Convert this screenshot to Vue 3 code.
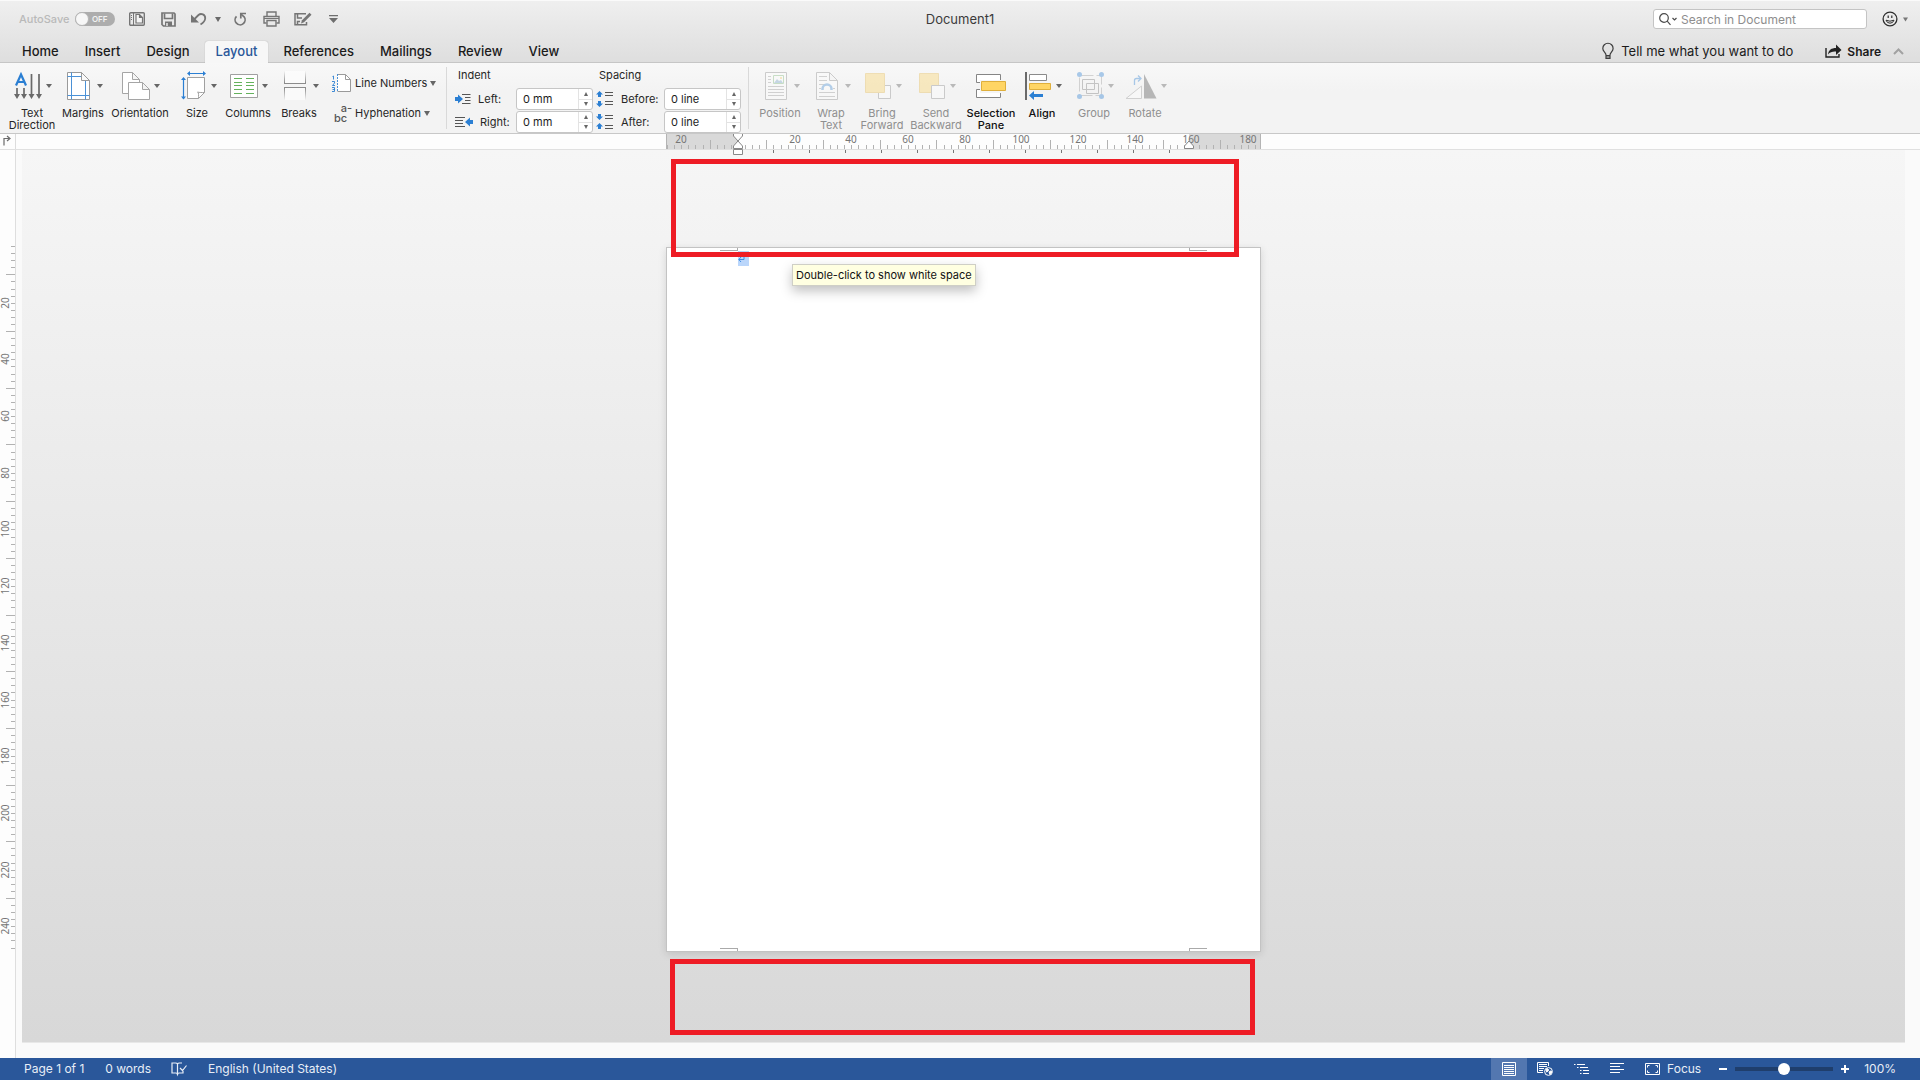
<script setup>
import { ref } from 'vue'

const tabs = ['Home', 'Insert', 'Design', 'Layout', 'References', 'Mailings', 'Review', 'View']
const activeTab = ref('Layout')
const autoSave = ref(false)
const search = ref('')
const zoom = ref(50)

const indentLeft = ref('0 mm')
const indentRight = ref('0 mm')
const spaceBefore = ref('0 line')
const spaceAfter = ref('0 line')

// Ruler geometry: 72 dpi, one tick every 2.5 mm
const STEP = 7.0866
const origin = 72
const hTicks = []
for (let i = -10; i <= 73; i++) {
  const long = Math.abs(i % 8) === 4
  hTicks.push({ x: Math.round(origin + i * STEP), top: long ? 6 : 11 })
}
const hLabels = [-20, 20, 40, 60, 80, 100, 120, 140, 160, 180].map((mm) => ({
  text: Math.abs(mm),
  x: mm === 180 ? 582 : mm === -20 ? 15 : Math.round(origin + (mm / 2.5) * STEP) - (mm === 160 ? 1 : 0)
}))
const tabStops = Array.from({ length: 12 }, (_, i) => 107 + i * 36)
const vTicks = Array.from({ length: 100 }, (_, i) => ({
  y: Math.round(i * STEP),
  left: i % 8 === 4 ? 6 : 11
}))
const vLabels = Array.from({ length: 12 }, (_, i) => ({
  text: (i + 1) * 20,
  y: Math.round((i + 1) * 8 * STEP)
}))
</script>

<template>
  <div class="app">
    <header class="top">
      <div class="titlebar">
        <div class="quick">
          <label class="autosave">
            <span>AutoSave</span>
            <input v-model="autoSave" type="checkbox" />
            <span class="switch"><i></i>OFF</span>
          </label>
          <button class="q q1" aria-label="Sidebar">
            <svg width="16" height="14" viewBox="0 0 16 14" fill="none" stroke="#757575"><rect x=".7" y=".7" width="14.6" height="12.6" rx="1" stroke-width="1.400" /><path d="M4.500 1v12M2 3.500h1M2 5.500h1M2 7.500h1" /><path d="M7 2.500h3.500l3 3v5.500H7zM10.500 2.500v3h3" stroke-width="1.200" fill="#f4f4f4" /></svg>
          </button>
          <button class="q q2" aria-label="Save">
            <svg width="15" height="15" viewBox="0 0 15 15" fill="none" stroke="#757575" stroke-width="1.700"><path d="M1 1h12l1 1v12H2.500L1 12.500z" /><path d="M3.500 1.500v5h8v-5" /><path d="M4 9.500h7V14H4z" fill="#757575" stroke="none" /><path d="M6 11v3" stroke="#e9e9e9" stroke-width="1.500" /></svg>
          </button>
          <button class="q q3" aria-label="Undo">
            <svg width="16" height="14" viewBox="0 0 16 14" fill="none" stroke="#757575" stroke-width="1.800"><path d="M3 7.500 7.500 3C10 .8 14.500 2.500 14.200 6.500 14 9 12 11 9.500 12.500" /><path d="M0 2.500v8h8z" fill="#757575" stroke="none" /></svg>
          </button>
          <button class="q q4" aria-label="Undo history"><svg width="6" height="5" viewBox="0 0 6 5"><path d="M0 0h6L3 5z" fill="#6a6a6a" /></svg></button>
          <button class="q q5" aria-label="Redo">
            <svg width="13" height="14" viewBox="0 0 13 14" fill="none" stroke="#757575" stroke-width="1.700"><path d="M2.500 4.300a5 5 0 1 0 7.600.500L7 2.200" /><path d="M12 1.500H6.800v5" /></svg>
          </button>
          <button class="q q6" aria-label="Print">
            <svg width="17" height="16" viewBox="0 0 17 16" fill="none" stroke="#757575" stroke-width="1.400"><path d="M4 5V1h9v4" /><path d="M3.500 12H1V5.500h15V12h-2.500" /><path d="M4 9.500h9V15H4z" /><path d="M1 7.500h15" stroke-width="1" /></svg>
          </button>
          <button class="q q7" aria-label="Edit">
            <svg width="18" height="15" viewBox="0 0 18 15" fill="none" stroke="#757575" stroke-width="1.500"><path d="M12 1.800H1v11h11.500V10" /><path d="M3.500 2v4H8M3.500 13V9.500H6" /><path d="m7 11.500 1-3.200L15.500.800l2 2-7.500 7.500z" fill="#757575" stroke="none" /></svg>
          </button>
          <button class="q" aria-label="Customize toolbar"><svg width="9" height="8" viewBox="0 0 9 8"><path d="M0 0h9v1.300H0zM0 3h9L4.500 8z" fill="#6e6e6e" /></svg></button>
        </div>
        <h1>Document1</h1>
        <div class="right-tools">
          <label class="search">
            <svg width="18" height="13" viewBox="0 0 18 13" fill="none" stroke="#4b4b4b" stroke-width="1.200"><circle cx="5" cy="5" r="4.300" /><path d="m8.200 8.200 3.300 3.600M13.500 5l2 2 2-2" /></svg>
            <input v-model="search" type="text" placeholder="Search in Document" aria-label="Search in Document" />
          </label>
          <button class="smile" aria-label="Feedback">
            <svg width="16" height="16" viewBox="0 0 16 16" fill="none" stroke="#2e2e2e" stroke-width="1.300"><circle cx="8" cy="8" r="6.900" /><path d="M4 9.200q4 2 8 0-1 3-4 3t-4-3z" stroke-width="1" /><path d="M6.200 4.500v2.500M9.800 4.500v2.500" stroke-width="1.200" /></svg>
            <svg width="5" height="5" viewBox="0 0 6 5"><path d="M0 0h6L3 5z" fill="#777" /></svg>
          </button>
        </div>
      </div>
      <div class="tabbar">
        <nav>
          <button v-for="t in tabs" :key="t" class="tab" :class="{ active: t === activeTab }" @click="activeTab = t">{{ t }}</button>
        </nav>
        <div class="assist">
          <button class="tell">
            <svg width="12" height="17" viewBox="0 0 12 17" fill="none" stroke="#3c3c3c" stroke-width="1.200"><path d="M4 12c0-2.500-3.200-3.500-3.200-6.600a5.100 5.100 0 0 1 10.300 0C11.100 8.500 8 9.500 8 12v3.500H4zM4 12.500h4M4 14h4" /></svg>
            Tell me what you want to do
          </button>
          <button class="share">
            <svg width="17" height="14" viewBox="0 0 17 14"><path d="M1 4v9h13v-3" fill="none" stroke="#222" stroke-width="1.400" /><path d="M3 10.500C3.500 6 6.500 4 11 4V.500L16.500 6 11 11V7.500C7.500 7.300 5 8 3 10.500z" fill="#222" /></svg>
            Share
          </button>
          <button class="fold" aria-label="Collapse ribbon"><svg width="11" height="7" viewBox="0 0 11 7" fill="none" stroke="#a2a2a2" stroke-width="2"><path d="m1 6 4.500-4.500L10 6" /></svg></button>
        </div>
      </div>
    </header>

    <section class="ribbon">
      <div class="group">
        <button class="big w48">
          <span class="pic">
            <svg width="28" height="30" viewBox="0 0 28 30" fill="none"><path d="M2 14.500 7 3.500l5 11M3.700 11h6.700" stroke="#2b7fd3" stroke-width="2.200" /><path d="M3 17v8M10 17v8M17.500 3v22M25 3v22" stroke="#6a6a6a" stroke-width="1.700" /><path d="m0 23 3 5 3-5zM7 23l3 5 3-5zM14.500 23l3 5 3-5zM22 23l3 5 3-5z" fill="#6a6a6a" /></svg>
            <i class="caret"></i>
          </span>
          Text<br />Direction
        </button>
        <button class="big w46">
          <span class="pic">
            <svg width="28" height="30" viewBox="0 0 28 30" fill="none"><path d="M2.500 1.500h14l8 8v19h-22z" fill="#fff" stroke="#9a9a9a" /><path d="M6.500 1.500v27M2.500 5.500h14M20.500 9.500v19M2.500 24.500h22" stroke="#4b91d6" /><path d="M16.500 1.500v8h8z" fill="#fafafa" stroke="#9a9a9a" /></svg>
            <i class="caret"></i>
          </span>
          Margins
        </button>
        <button class="big w60">
          <span class="pic">
            <svg width="28" height="30" viewBox="0 0 28 30" fill="#fff" stroke="#a5a5a5"><path d="M.500 1.500h10l7 7v14H.500zM10.500 1.500v7h7" /><path d="M6.500 11.500h14l7 7v10h-21zM20.500 11.500v7h7" /></svg>
            <i class="caret"></i>
          </span>
          Orientation
        </button>
        <button class="big w46">
          <span class="pic">
            <svg width="28" height="30" viewBox="0 0 28 30" fill="none"><path d="M8.500 6.500h17v15l-6 6h-11z" fill="#fff" stroke="#a0a0a0" /><path d="M19.500 27.500c0-3 .5-6-1-6.500 2 .7 4.500.5 7 .500" stroke="#a0a0a0" /><path d="M9 2.500h17M4.500 7v21" stroke="#2b7fd3" stroke-width="1.200" /><path d="m11 0-3 2.500L11 5zM24 0l3 2.500L24 5zM2 9l2.500-3L7 9zM2 25.500l2.500 3 2.500-3z" fill="#2b7fd3" /></svg>
            <i class="caret"></i>
          </span>
          Size
        </button>
        <button class="big w48">
          <span class="pic">
            <svg width="28" height="30" viewBox="0 0 28 30" fill="none"><path d="M.500 3.500h27v23H.500z" fill="#fff" stroke="#a0a0a0" /><path d="M4 7.500h8M4 11.500h8M4 14.500h8M4 18.500h8M4 22.500h8M16 7.500h8M16 11.500h8M16 14.500h8M16 18.500h8M16 22.500h8" stroke="#64b25c" stroke-width="1.200" /></svg>
            <i class="caret"></i>
          </span>
          Columns
        </button>
        <button class="big w46">
          <span class="pic">
            <svg width="28" height="30" viewBox="0 0 28 30" fill="none"><defs><linearGradient id="fadeUp" x1="0" y1="1" x2="0" y2="0"><stop stop-color="#888" /><stop offset="1" stop-color="#888" stop-opacity="0" /></linearGradient><linearGradient id="fadeDown" x1="0" y1="0" x2="0" y2="1"><stop stop-color="#888" /><stop offset="1" stop-color="#888" stop-opacity="0" /></linearGradient></defs><path d="M4 0h20v12H4zM4 17h20v12H4z" fill="#fff" opacity=".6" /><path d="M3 0h1v12H3zM24 0h1v12h-1z" fill="url(#fadeUp)" /><path d="M3 17h1v12H3zM24 17h1v12h-1z" fill="url(#fadeDown)" /><path d="M3 12.500h22M3 16.500h22" stroke="#8c8c8c" /></svg>
            <i class="caret"></i>
          </span>
          Breaks
        </button>
        <div class="stack">
          <button class="small">
            <svg width="20" height="20" viewBox="0 0 20 20" fill="none"><path d="M5.500 1.500h8l5 5v12h-13" fill="#fff" stroke="#9a9a9a" /><path d="M13.500 1.500v5h5" stroke="#9a9a9a" /><path d="M5.500 1v18" stroke="#4b91d6" stroke-dasharray="2 1" /><path d="M.500 3.500 1.500 3v3.500M0 8.500h2.500v1.500l-2 2.500h2.500M0 14.500h2.500v4H0M.500 16.500h2" stroke="#2b7fd3" stroke-width=".9" /></svg>
            <span>Line Numbers</span><i class="caret"></i>
          </button>
          <button class="small">
            <span class="hy" aria-hidden="true"><b>a-</b><b>bc</b></span>
            <span>Hyphenation</span><i class="caret"></i>
          </button>
        </div>
      </div>

      <div class="group fields">
        <fieldset class="indent">
          <legend>Indent</legend>
          <div class="row">
            <svg width="16" height="12" viewBox="0 0 16 12"><path d="M0 4h3V1.500L8 6l-5 4.500V8H0z" fill="#2b7fd3" /><path d="M7 1.500h8.500M10 4.500h5.500M10 7.500h5.500M7 10.500h8.500" stroke="#555" /></svg>
            <label for="il">Left:</label>
            <span class="num"><input id="il" v-model="indentLeft" type="text" /><span class="step"><button aria-label="Increase left"><i class="up"></i></button><button aria-label="Decrease left"><i class="down"></i></button></span></span>
          </div>
          <div class="row">
            <svg width="18" height="12" viewBox="0 0 18 12"><path d="M0 1.500h10M0 4.500h8M0 7.500h8M0 10.500h10" stroke="#555" /><path d="M18 4h-3V1.500L10 6l5 4.500V8h3z" fill="#2b7fd3" /></svg>
            <label for="ir">Right:</label>
            <span class="num"><input id="ir" v-model="indentRight" type="text" /><span class="step"><button aria-label="Increase right"><i class="up"></i></button><button aria-label="Decrease right"><i class="down"></i></button></span></span>
          </div>
        </fieldset>
        <fieldset class="spacing">
          <legend>Spacing</legend>
          <div class="row">
            <svg width="18" height="18" viewBox="0 0 18 18"><path d="M3.500 1 7 4.500H5V7H2V4.500H0zM3.500 17 0 13.500h2V11h3v2.500h2z" fill="#2b7fd3" /><path d="M9 2.500h8M9 5.500h8M9 11.500h8M9 14.500h8" stroke="#555" /></svg>
            <label for="sb">Before:</label>
            <span class="num"><input id="sb" v-model="spaceBefore" type="text" /><span class="step"><button aria-label="Increase before"><i class="up"></i></button><button aria-label="Decrease before"><i class="down"></i></button></span></span>
          </div>
          <div class="row">
            <svg width="18" height="18" viewBox="0 0 18 18"><path d="M3.500 7 0 3.500h2V1h3v2.500h2zM3.500 10 7 13.500H5V16H2v-2.500H0z" fill="#2b7fd3" /><path d="M9 2.500h8M9 5.500h8M9 12.500h8M9 15.500h8" stroke="#555" /></svg>
            <label for="sa">After:</label>
            <span class="num"><input id="sa" v-model="spaceAfter" type="text" /><span class="step"><button aria-label="Increase after"><i class="up"></i></button><button aria-label="Decrease after"><i class="down"></i></button></span></span>
          </div>
        </fieldset>
      </div>

      <div class="group">
        <button class="big w48" disabled>
          <span class="pic">
            <svg width="28" height="30" viewBox="0 0 28 30" fill="none"><path d="M3.500 1.500h21v27h-21z" fill="#fff" stroke="#888" /><path d="M6 5.500h3M6 8.500h3M6 11.500h3M6 15.500h16M6 18.500h16M6 21.500h16M6 24.500h16" stroke="#999" /><path d="M11.500 4.500h10v8h-10z" stroke="#7fb97a" /><path d="m12 12 3-4 2 2 2-1 2 3z" fill="#7aa6c9" /><circle cx="19" cy="7" r="1" fill="#f2c14a" /></svg>
            <i class="caret"></i>
          </span>
          Position
        </button>
        <button class="big w46" disabled>
          <span class="pic">
            <svg width="28" height="30" viewBox="0 0 28 30" fill="none"><path d="M3.500 1.500h13l8 8v19h-21zM16.500 1.500v8h8" fill="#fff" stroke="#888" /><path d="M6 5.500h8M6 9.500h8M6 13.500h6M6 17.500h2M20 17.500h2M6 21.500h16M6 25.500h16" stroke="#999" /><path d="M9.500 19v-1a4.500 4.500 0 0 1 9 0v1" stroke="#4b91d6" stroke-width="2.500" /></svg>
            <i class="caret"></i>
          </span>
          Wrap<br />Text
        </button>
        <button class="big w48" disabled>
          <span class="pic">
            <svg width="28" height="30" viewBox="0 0 28 30"><path d="M14.500 14.500h12v13h-12z" fill="#fff" stroke="#888" /><path d="M1.500 2.500h19v19h-19z" fill="#fbd469" stroke="#e5b84a" /></svg>
            <i class="caret"></i>
          </span>
          Bring<br />Forward
        </button>
        <button class="big w52" disabled>
          <span class="pic">
            <svg width="28" height="30" viewBox="0 0 28 30"><path d="M1.500 2.500h19v19h-19z" fill="#fbd469" stroke="#e5b84a" /><path d="M13.500 14.500h13v13h-13z" fill="#fff" stroke="#888" /></svg>
            <i class="caret"></i>
          </span>
          Send<br />Backward
        </button>
        <button class="big strong w50">
          <span class="pic">
            <svg width="30" height="30" viewBox="0 0 30 30"><path d="M.500 3.500h24v8H.500zM.500 18.500h24v8H.500z" fill="#fff" stroke="#858585" /><path d="M4 9h22v13H4z" fill="#f5f5f5" /><path d="M5.500 10.500h24v9h-24z" fill="#ffd564" stroke="#dfaf3c" /></svg>
          </span>
          Selection<br />Pane
        </button>
        <button class="big strong w44">
          <span class="pic">
            <svg width="28" height="30" viewBox="0 0 28 30"><path d="M1 1h2v28H1z" fill="#6a6a6a" /><path d="M5.500 3.500h17v6h-17z" fill="#fff" stroke="#8a8a8a" /><path d="M5.500 12.500h21v6h-21z" fill="#ffd564" stroke="#dfaf3c" /><path d="M5 24.500 10 20v3h9v3h-9v3z" fill="#2b7fd3" /></svg>
            <i class="caret"></i>
          </span>
          Align
        </button>
        <button class="big w52" disabled>
          <span class="pic">
            <svg width="28" height="30" viewBox="0 0 28 30" fill="none"><path d="M3.500 4.500h22v20h-22z" stroke="#999" stroke-dasharray="14 3" /><path d="M6.500 8.500h12v10h-12zM10.500 12.500h12v10h-12z" stroke="#777" /><path d="M6 3.500a2.500 2.500 0 1 0-5 0 2.500 2.500 0 0 0 5 0zM28 3.500a2.500 2.500 0 1 0-5 0 2.500 2.500 0 0 0 5 0zM6 25.500a2.500 2.500 0 1 0-5 0 2.500 2.500 0 0 0 5 0zM28 25.500a2.500 2.500 0 1 0-5 0 2.500 2.500 0 0 0 5 0z" fill="#2b7fd3" /></svg>
            <i class="caret"></i>
          </span>
          Group
        </button>
        <button class="big w42" disabled>
          <span class="pic">
            <svg width="32" height="30" viewBox="0 0 32 30" fill="none"><path d="M16.500 15v12.500H1z" fill="#fff" stroke="#999" /><path d="M19 3v24.500h12.500z" fill="#555" /><path d="M9.500 14V9.500q0-2 2-2H15" stroke="#2b7fd3" stroke-width="1.300" /><path d="m13 4.500 3 3-3 3" stroke="#2b7fd3" stroke-width="1.300" /></svg>
            <i class="caret"></i>
          </span>
          Rotate
        </button>
      </div>
    </section>

    <div class="hruler">
      <button class="corner" aria-label="Tab stop type"><svg width="8" height="11" viewBox="0 0 8 11" fill="none" stroke="#6b6b6b" stroke-width="1.200"><path d="M1 10.500V3.500h5M4 1l3 2.500L4 6" /></svg></button>
      <div class="hscale">
        <svg width="595" height="15" viewBox="0 0 595 15">
          <path d="M0 0h72v15H0zM523 0h72v15h-72z" fill="#d9d9d9" />
          <path d="M0 0h1v15H0zM594 0h1v15h-1z" fill="#b4b4b4" />
          <path v-for="t in hTicks" :key="t.x" :d="`M${t.x} ${t.top}h1V15h-1z`" fill="#b2b2b2" />
          <text v-for="l in hLabels" :key="l.x" :x="l.x" y="9" text-anchor="middle">{{ l.text }}</text>
          <path v-for="s in tabStops" :key="s" :d="`M${s} 16h1v3h-1z`" fill="#777" />
          <path d="M67.500 0v2l4.500 5 4.500-5V0M67.500 14.500V12L72 7l4.500 5v2.500z" fill="#fff" stroke="#888" />
          <path d="M67.500 15.500h9v5h-9z" fill="#fff" stroke="#888" />
          <path d="M518.500 14.500V12l4.500-5 4.500 5v2.500z" fill="#fff" stroke="#888" />
        </svg>
      </div>
    </div>

    <main class="work">
      <aside class="vruler">
        <svg width="15" height="706" viewBox="0 0 15 706">
          <path v-for="t in vTicks" :key="t.y" :d="`M${t.left} ${t.y}H15v1H${t.left}z`" fill="#b2b2b2" />
          <text v-for="l in vLabels" :key="l.y" :transform="`translate(9 ${l.y}) rotate(-90)`" text-anchor="middle">{{ l.text }}</text>
        </svg>
      </aside>
      <div class="canvas">
        <article class="page">
          <i class="mark tl"></i><i class="mark tr"></i><i class="mark bl"></i><i class="mark br"></i>
          <p class="para"><span><svg width="7" height="8" viewBox="0 0 7 8" fill="none" stroke="#3d8ee6"><path d="M6 0v4.500H1M3 2 .800 4.500 3 7" /></svg></span></p>
          <div class="callout upper"></div>
          <div class="callout lower"></div>
          <div class="tip" role="tooltip">Double-click to show white space</div>
        </article>
      </div>
    </main>

    <footer class="status">
      <span class="pages">Page 1 of 1</span>
      <span class="words">0 words</span>
      <button class="proof" aria-label="Proofing">
        <svg width="16" height="14" viewBox="0 0 16 14" fill="none" stroke="#e8eef7" stroke-width="1.200"><path d="M11 1H8.500Q7 1 6.500 2 6 1 4.500 1H1v10h4q1 0 1.500 1.500Q7 11 8 11h4V9M6.500 2v10M9 6l2.500 2.500 4-5" /></svg>
      </button>
      <span>English (United States)</span>
      <div class="views">
        <button class="view on" aria-label="Print layout"><svg width="14" height="14" viewBox="0 0 14 14" fill="none" stroke="#fff"><path d="M.500.500h13v13H.500zM2 3.500h10M2 5.500h10M2 7.500h10M2 9.500h10M2 11.500h10" /></svg></button>
        <button class="view" aria-label="Web layout"><svg width="16" height="14" viewBox="0 0 16 14" fill="none" stroke="#fff"><path d="M6 10.500H.500V.500h11V4M2 2.500h8M2 4.500h8M2 6.500h5M2 8.500h4" /><circle cx="11.500" cy="9.500" r="3.900" fill="#2a579a" /><path d="M9 7.500q2-1.500 2.500 0T9.500 10zM12 10q2-2 3 0l-2 2.500z" fill="#fff" /></svg></button>
        <button class="view" aria-label="Outline"><svg width="15" height="12" viewBox="0 0 15 12" fill="none" stroke="#fff"><path d="M0 1.500h1.500M3 1.500h8M3 4.500h1.500M6 4.500h8M6 7.500h1.500M9 7.500h6M6 10.500h1.500M9 10.500h6" /></svg></button>
        <button class="view" aria-label="Draft"><svg width="14" height="11" viewBox="0 0 14 11" fill="none" stroke="#fff"><path d="M0 .500h14M0 3.500h10M0 6.500h14M0 9.500h10" /></svg></button>
        <button class="focus">
          <svg width="15" height="12" viewBox="0 0 15 12" fill="none" stroke="#fff"><path d="M.500.500h14v11H.500zM2.500 4.500v-2h2M10.500 2.500h2v2M12.500 7.500v2h-2M4.500 9.500h-2v-2" /></svg>
          Focus
        </button>
        <button class="pm" aria-label="Zoom out"><svg width="8" height="8" viewBox="0 0 8 8"><path d="M0 3h8v2H0z" fill="#fff" /></svg></button>
        <input v-model="zoom" class="zoom" type="range" min="0" max="100" aria-label="Zoom" />
        <button class="pm" aria-label="Zoom in"><svg width="8" height="8" viewBox="0 0 8 8"><path d="M0 3h3V0h2v3h3v2H5v3H3V5H0z" fill="#fff" /></svg></button>
        <span class="pct">100%</span>
      </div>
    </footer>
  </div>
</template>

<style>
body { margin: 0; }
</style>

<style scoped>
.app { display: flex; flex-direction: column; min-height: 100vh; font-family: Inter, "Liberation Sans", sans-serif; font-size: 11px; color: #262626; background: #fafafa; }
.app * { box-sizing: border-box; }
button { font: inherit; color: inherit; background: none; border: 0; padding: 0; margin: 0; }
svg { display: block; flex: none; overflow: visible; }
i { font-style: normal; }

.top { background: linear-gradient(#efefef, #dedede); border-top: 1px solid #fafafa; border-bottom: 1px solid #c6c6c6; }
.titlebar { display: flex; align-items: center; height: 36px; padding: 0 12px 0 19px; }
.quick, .right-tools { flex: 1; display: flex; align-items: center; }
.quick { margin-right: -7px; }
.right-tools { justify-content: flex-end; }
.autosave { display: flex; align-items: center; gap: 6px; color: #b9b9b9; font-weight: 500; margin-right: 14px; }
.autosave input { position: absolute; opacity: 0; }
.switch { display: flex; align-items: center; justify-content: space-between; width: 40px; height: 14px; padding-right: 8px; border-radius: 7px; background: #adadad; color: #f2f2f2; font-size: 8px; font-weight: 600; }
.switch i { width: 14px; height: 14px; border-radius: 50%; background: #f7f7f7; border: 1px solid #b5b5b5; }
.q1 { margin-right: 16px; }
.q2 { margin-right: 15px; }
.q3 { margin-right: 8px; }
.q4 { margin-right: 13px; }
.q5 { margin-right: 16px; }
.q6 { margin-right: 14px; }
.q7 { margin-right: 17px; }
h1 { margin: 0; font-size: 13px; font-weight: 400; color: #3b3b3b; }
.search { display: flex; align-items: center; gap: 4px; width: 214px; height: 20px; padding-left: 5px; background: #fff; border: 1px solid #c4c4c4; border-radius: 3px; }
.search input { flex: 1; min-width: 0; border: 0; padding: 0; outline: 0; background: none; font: 12px Inter, sans-serif; }
.search input::placeholder { color: #8e8e8e; opacity: 1; }
.smile { display: flex; align-items: center; gap: 5px; margin-left: 15px; }

.tabbar { display: flex; justify-content: space-between; height: 25px; padding: 4px 16px 0 11px; }
nav { display: flex; gap: 4px; }
.tab { height: 22px; padding: 0 11px; font-size: 13px; line-height: 19px; padding-bottom: 2px; font-weight: 500; color: #1b1b1b; border-radius: 3px 3px 0 0; }
.tab.active { background: #f7f7f7; color: #2a579a; box-shadow: 0 0 1px #999; clip-path: inset(-2px -2px 0 -2px); }
.assist { display: flex; align-items: center; height: 20px; font-size: 12px; color: #1b1b1b; }
.tell, .share { display: flex; align-items: center; }
.tell { gap: 7px; margin-right: 32px; font-size: 13px; }
.share { gap: 5px; font-weight: 600; margin-right: 12px; }

.ribbon { display: flex; height: 71px; background: linear-gradient(#f8f8f8, #f3f3f3 40%); border-bottom: 1px solid #c8c8c8; padding-left: 8px; }
.group { display: flex; gap: 4px; padding-top: 8px; }
.big { display: block; text-align: center; line-height: 12px; white-space: nowrap; align-self: flex-start; }
.big:disabled { color: #8f8f8f; }
.big:disabled svg { opacity: .38; }
.big:disabled .caret { border-top-color: #b9b9b9; }
.strong { color: #111; font-weight: 500; }
.pic { display: flex; align-items: center; justify-content: center; gap: 4px; height: 30px; margin-bottom: 6px; padding-left: 2px; }
.strong.w50 .pic { padding-left: 0; }
.caret { flex: none; width: 0; height: 0; border: 3px solid transparent; border-top: 4px solid #666; border-bottom: 0; }
.w42 { width: 42px; } .w44 { width: 44px; } .w46 { width: 46px; } .w48 { width: 48px; } .w50 { width: 50px; } .w52 { width: 52px; } .w60 { width: 60px; }
.stack { display: flex; flex-direction: column; gap: 10px; padding: 2px 0 0 6px; width: 116px; }
.small { display: flex; align-items: center; gap: 3px; height: 20px; white-space: nowrap; }
.small .caret { border-width: 3px; border-top-width: 5px; border-bottom-width: 0; }
.hy { display: flex; flex-direction: column; width: 20px; color: #555; font-size: 11px; line-height: 10px; text-align: left; padding-left: 2px; }
.hy b { font-weight: 500; }
.hy b:first-child { text-align: right; }

.fields { position: relative; gap: 0; padding: 6px 8px 0 9px; margin: 0 7px 0 4px; }
.fields::before, .fields::after { content: ""; position: absolute; top: 4px; height: 62px; width: 1px; background: #d9d9d9; }
.fields::before { left: 0; }
.fields::after { right: 0; }
fieldset { border: 0; margin: 0; padding: 0; min-width: 0; }
legend { padding: 0 0 0 3px; line-height: 12px; margin-bottom: 7px; }
.row { display: flex; align-items: center; height: 22px; margin-bottom: 1px; }
.row > svg { margin-right: 7px; }
.row label { flex: 1; }
.indent .row { width: 138px; }
.spacing .row { width: 145px; }
.indent { width: 141px; }
.num { display: flex; width: 77px; height: 22px; background: #fff; border: 1px solid #c6c6c6; border-radius: 3px; }
.num input { flex: 1; min-width: 0; border: 0; outline: 0; padding: 0 0 0 6px; background: none; font: 11px Inter, sans-serif; color: #1c1c1c; }
.step { display: flex; flex-direction: column; width: 14px; border-left: 1px solid #e3e3e3; }
.step button { flex: 1; display: flex; align-items: center; justify-content: center; }
.step button + button { border-top: 1px solid #e3e3e3; }
.up, .down { border: 2px solid transparent; }
.up { border-bottom: 4px solid #666; border-top: 0; }
.down { border-top: 4px solid #666; border-bottom: 0; }

.hruler { position: relative; z-index: 1; display: flex; height: 16px; background: #fdfdfd; border-bottom: 1px solid #e0e0e0; }
.corner { width: 16px; padding: 0 0 0 3px; border-right: 1px solid #dcdcdc; }
.corner svg { margin-top: -2px; }
.hscale { flex: 1; display: flex; justify-content: center; padding: 0 14px 0 5px; }
text { font: 10px "Noto Sans", sans-serif; fill: #757575; }

.work { flex: 1; display: flex; background: #fafafa; padding: 0 15px 15px 0; }
.vruler { width: 16px; margin-bottom: -15px; padding-top: 96px; background: #fdfdfd; border-right: 1px solid #dedede; flex: none; }
.canvas { flex: 1; margin-left: 6px; padding: 97px 0 90px; background: linear-gradient(#f6f6f6, #d8d8d8); border-bottom: 1px solid #e8e8e8; }
.page { position: relative; width: 595px; height: 705px; margin: 0 auto; background: #fff; border: 1px solid #c3c3c3; box-shadow: 0 2px 8px rgba(0, 0, 0, .12); }
.mark { position: absolute; width: 18px; height: 3px; border: 0 solid #aaa; }
.tl { left: 53px; top: 0; border-width: 0 1px 1px 0; }
.tr { right: 53px; top: 0; border-width: 0 0 1px 1px; }
.bl { left: 53px; bottom: 0; border-width: 1px 1px 0 0; }
.br { right: 53px; bottom: 0; border-width: 1px 0 0 1px; }
.para { margin: 0; padding: 3px 71px; }
.para span { display: flex; align-items: center; width: 11px; height: 15px; background: #bad6fb; }
.callout { position: absolute; border: 5px solid #ee1c25; }
.upper { left: 4px; top: -89px; width: 568px; height: 98px; }
.lower { left: 3px; top: 711px; width: 585px; height: 76px; }
.tip { position: absolute; left: 125px; top: 16px; height: 22px; padding: 0 3px; line-height: 20px; background: #ffffe1; border: 1px solid #cfcfc6; box-shadow: 0 5px 12px rgba(0, 0, 0, .25); color: #111; white-space: nowrap; }

.status { display: flex; align-items: center; height: 23px; padding: 0 24px 2px; background: #2a579a; color: #e8eef7; font-size: 12px; }
.pages { margin-right: 21px; }
.words { margin-right: 20px; }
.proof { margin-right: 21px; }
.views { display: flex; align-items: center; margin-left: auto; }
.view { display: flex; align-items: center; justify-content: center; width: 36px; height: 23px; }
.on { background: #5377b0; margin-bottom: -2px; padding-bottom: 2px; }
.focus { display: flex; align-items: center; gap: 7px; margin: 0 18px 0 10px; }
.zoom { appearance: none; width: 98px; height: 12px; margin: 0 8px; background: linear-gradient(#1f3e6c, #1f3e6c) center / 100% 4px no-repeat; outline: 0; }
.zoom::-webkit-slider-thumb { appearance: none; width: 12px; height: 12px; border-radius: 50%; background: #fff; }
.pct { margin-left: 15px; }
</style>
